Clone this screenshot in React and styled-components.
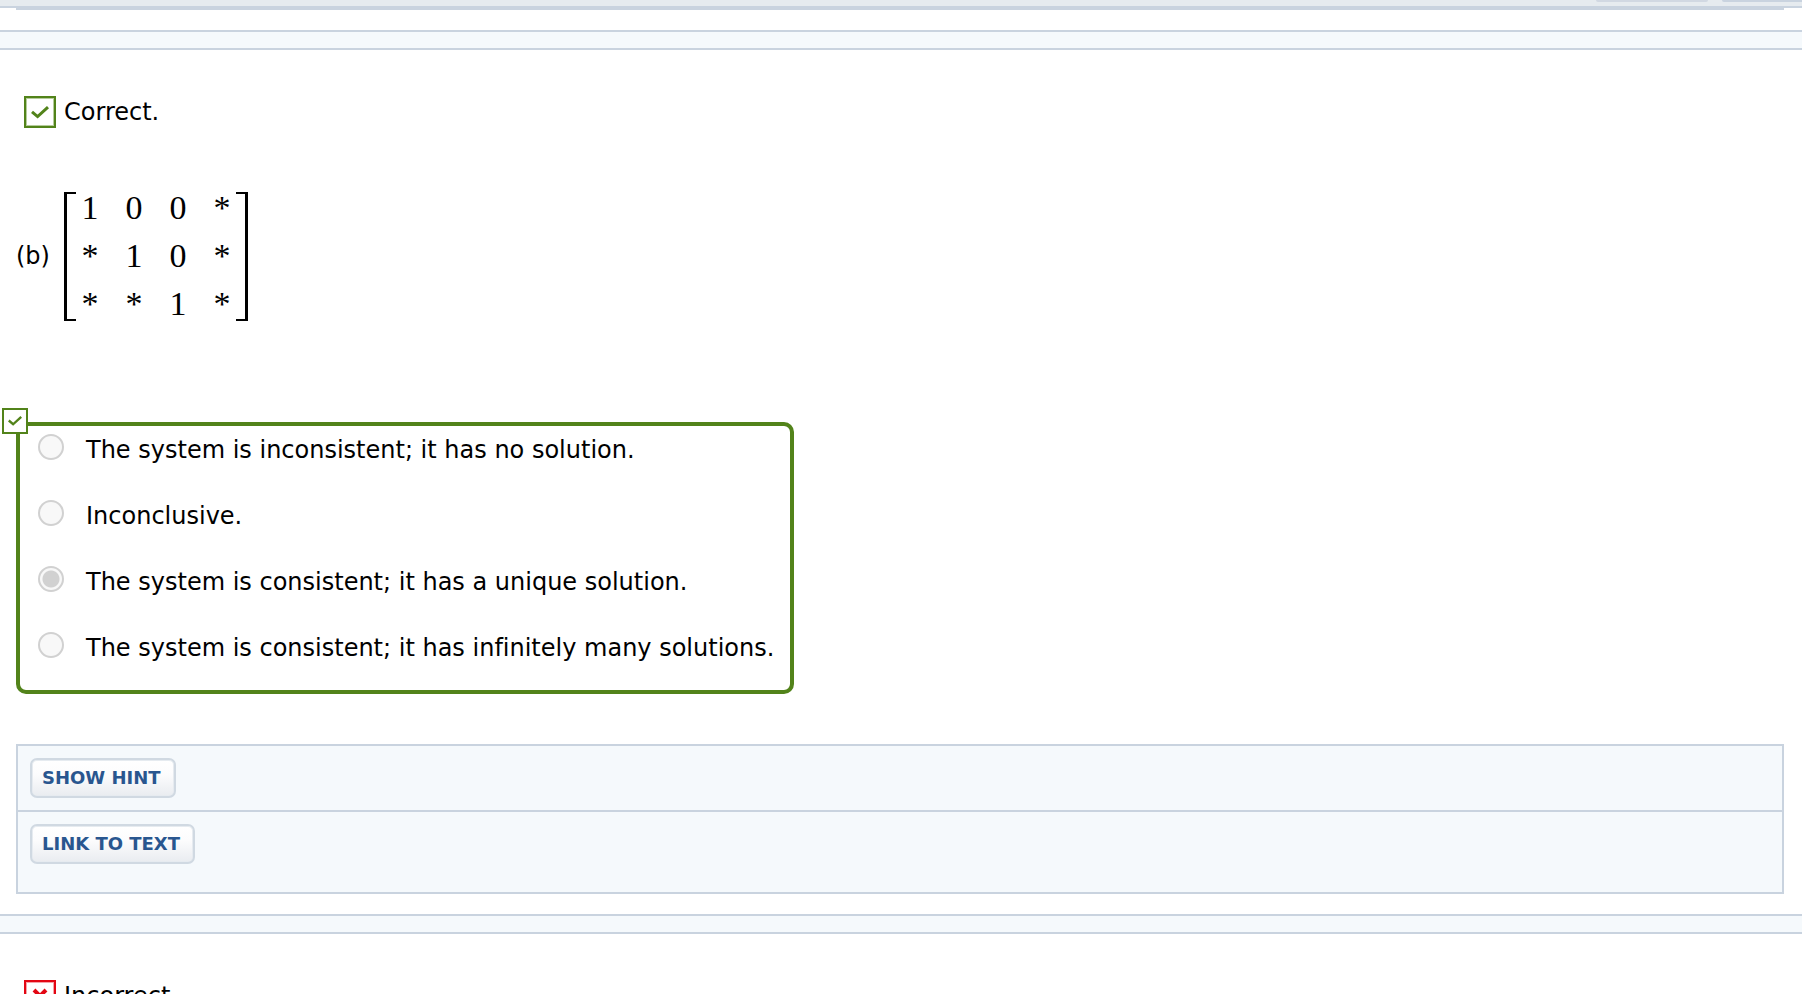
import React from 'react';
import styled, { createGlobalStyle } from 'styled-components';

const options = [
  'The system is inconsistent; it has no solution.',
  'Inconclusive.',
  'The system is consistent; it has a unique solution.',
  'The system is consistent; it has infinitely many solutions.',
];

const matrix = [
  ['1', '0', '0', '*'],
  ['*', '1', '0', '*'],
  ['*', '*', '1', '*'],
];

const CheckIcon = () => (
  <svg viewBox="0 0 18 13" fill="none" stroke="currentColor" strokeWidth="3" aria-hidden="true">
    <path d="M1 5.8 L6.6 10.6 L17 1.2" />
  </svg>
);

const CrossIcon = () => (
  <svg viewBox="0 0 18 18" fill="none" stroke="currentColor" strokeWidth="4" aria-hidden="true">
    <path d="M3 3 L15 15 M15 3 L3 15" />
  </svg>
);

const App = () => {
  return (
    <Page>
      <GlobalStyle />
      <TopBar>
        <Tab />
        <Tab $last />
      </TopBar>
      <TopRule />
      <Band />
      <Part>
        <Result>
          <Mark $color="#52831a" $inner="#b5cc9b">
            <CheckIcon />
          </Mark>
          Correct.
        </Result>
        <Question>
          <span>(b)</span>
          <Matrix>
            <tbody>
              {matrix.map((row, i) => (
                <tr key={i}>
                  {row.map((cell, j) => (
                    <td key={j}>{cell}</td>
                  ))}
                </tr>
              ))}
            </tbody>
          </Matrix>
        </Question>
        <Answers>
          <Badge>
            <CheckIcon />
          </Badge>
          {options.map((text, i) => (
            <Option key={text}>
              <Radio type="radio" name="part-b" defaultChecked={i === 2} disabled />
              <span>{text}</span>
            </Option>
          ))}
        </Answers>
        <Links>
          <LinkRow>
            <Button type="button">SHOW HINT</Button>
          </LinkRow>
          <LinkRow $last>
            <Button type="button">LINK TO TEXT</Button>
          </LinkRow>
        </Links>
      </Part>
      <Band />
      <Part>
        <Result>
          <Mark $color="#e30613" $inner="#f5a3a8">
            <CrossIcon />
          </Mark>
          Incorrect.
        </Result>
      </Part>
    </Page>
  );
};

export default App;

const GlobalStyle = createGlobalStyle`
  *,
  *::before,
  *::after {
    box-sizing: border-box;
  }

  body {
    margin: 0;
    background: #fff;
    color: #000;
    font-family: Verdana, "DejaVu Sans", sans-serif;
    font-size: 24px;
    font-variant-ligatures: none;
    line-height: 28px;
  }
`;

const Page = styled.main`
  height: 100vh;
  overflow: hidden;
`;

const TopBar = styled.div`
  display: flex;
  justify-content: flex-end;
  gap: 14px;
  height: 8px;
  background: #e6ebef;
  border-bottom: 2px solid #c9d3df;
`;

const Tab = styled.div`
  width: ${(props) => (props.$last ? '80px' : '112px')};
  height: 2px;
  background: ${(props) => (props.$last ? '#c9d3df' : '#d1d8e2')};
  border-radius: ${(props) => (props.$last ? '0 0 0 4px' : '0 0 4px 4px')};
`;

const TopRule = styled.div`
  height: 2px;
  margin: 0 18px 20px 16px;
  background: #c9d3df;
`;

const Band = styled.div`
  height: 20px;
  background: #f5f9fc;
  border: solid #c9d3df;
  border-width: 2px 0;
`;

const Part = styled.section`
  padding: 46px 18px 20px 16px;
`;

const Result = styled.div`
  display: flex;
  align-items: center;
  gap: 8px;
  height: 32px;
  margin-left: 8px;
`;

const Mark = styled.span`
  display: flex;
  align-items: center;
  justify-content: center;
  width: 32px;
  height: 32px;
  color: ${(props) => props.$color};
  border: 2px solid;
  box-shadow: inset 0 0 0 1px ${(props) => props.$inner};

  svg {
    width: 18px;
  }
`;

const Question = styled.div`
  display: flex;
  align-items: center;
  gap: 14px;
  margin-top: 56px;
`;

const Matrix = styled.table`
  position: relative;
  padding: 0 4px;
  border-spacing: 0;
  font-family: "Times New Roman", "Liberation Serif", serif;
  font-size: 34px;
  line-height: 48px;
  text-align: center;

  td {
    width: 44px;
    padding: 0;
  }

  /* brackets */
  &::before,
  &::after {
    content: '';
    position: absolute;
    top: 8px;
    bottom: 7px;
    width: 12px;
    border: solid #000;
  }

  &::before {
    left: 0;
    border-width: 2px 0 2px 3px;
  }

  &::after {
    right: 0;
    border-width: 2px 3px 2px 0;
  }
`;

const Answers = styled.div`
  position: relative;
  width: fit-content;
  margin-top: 94px;
  padding: 0 16px 0 18px;
  border: 4px solid #52831a;
  border-radius: 10px;
`;

const Badge = styled.span`
  position: absolute;
  top: -18px;
  left: -18px;
  display: flex;
  align-items: center;
  justify-content: center;
  width: 26px;
  height: 26px;
  color: #52831a;
  background: #fff;
  border: 2px solid;

  svg {
    width: 14px;
  }
`;

const Option = styled.label`
  display: flex;
  gap: 22px;
  height: 66px;
  padding-top: 8px;

  span {
    padding-top: 2px;
  }
`;

const Radio = styled.input`
  appearance: none;
  flex: none;
  width: 26px;
  height: 26px;
  margin: 0;
  background: #f8f8f8;
  border: 2px solid #d1d1d1;
  border-radius: 50%;

  &:checked {
    background: radial-gradient(circle, #d1d1d1 8px, #f8f8f8 9px);
  }
`;

const Links = styled.div`
  margin-top: 50px;
  background: #f5f9fc;
  border: 2px solid #c9d3df;
`;

const LinkRow = styled.div`
  padding: 12px 12px ${(props) => (props.$last ? '28px' : '12px')};
  border-bottom: ${(props) => (props.$last ? 'none' : '2px solid #c9d3df')};
`;

const Button = styled.button`
  display: block;
  height: 40px;
  padding: 0 13px 0 10px;
  color: #29568f;
  font-family: inherit;
  font-size: 18px;
  font-weight: bold;
  line-height: 36px;
  background: linear-gradient(#fff, #fcfcfd 40%, #e9ecf0);
  border: 2px solid #d0d9e2;
  border-radius: 7px;
  box-shadow: inset 0 0 0 1px #e6ebf0;
`;
